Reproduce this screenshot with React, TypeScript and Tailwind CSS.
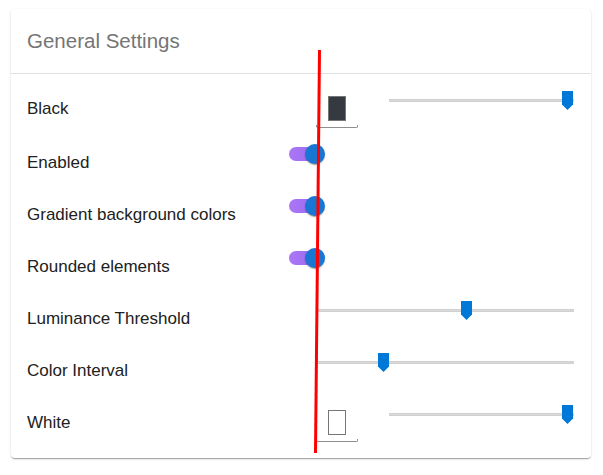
import React from "react";

const font = { fontFamily: '"Liberation Sans", Arial, sans-serif' };

function Label({ children }: { children: React.ReactNode }) {
  return (
    <div className="w-[290px] h-[52px] pt-[2px] flex items-center text-[17px] text-[#212121] shrink-0 whitespace-nowrap">
      {children}
    </div>
  );
}

function Thumb() {
  return (
    <svg width="11" height="19" viewBox="0 0 11 19" className="block">
      <path d="M0 0 H11 V13.5 L5.5 19 L0 13.5 Z" fill="#0078d7" />
    </svg>
  );
}

function Slider({ pos, className }: { pos: number; className?: string }) {
  return (
    <div className={"relative h-[36px] flex items-center " + (className ?? "")}>
      <div className="w-full h-[3px] bg-[#d9d9d9] border-y border-[#d0d0d0]" />
      <div className="absolute top-[9px]" style={{ left: pos }}>
        <Thumb />
      </div>
    </div>
  );
}

function Toggle() {
  return (
    <div className="h-[36px] flex items-center -ml-[28px]">
      <div className="relative w-[36px] h-[20px] flex items-center">
        <div className="w-[34px] h-[14px] rounded-full bg-gradient-to-r from-[#ab76f6] to-[#9a69ef]" />
        <div className="absolute left-[16px] top-0 w-[20px] h-[20px] rounded-full bg-[#1976d2] shadow-[0_2px_1px_-1px_rgba(0,0,0,0.2),0_1px_1px_0_rgba(0,0,0,0.14),0_1px_3px_0_rgba(0,0,0,0.12)]" />
      </div>
    </div>
  );
}

function ColorInput({ color }: { color: string }) {
  return (
    <div className="mt-[14px] -ml-[1px] w-[42px] flex flex-col shrink-0">
      <div
        className="ml-[12px] w-[18px] h-[25px] border border-[#767676]"
        style={{ background: color }}
      />
      <div className="mt-[4px] w-[42px] h-[3px] border-b border-x border-[#8e8e8e] rounded-b-[2px]" />
    </div>
  );
}

function ColorRow({ label, color, extra }: { label: string; color: string; extra?: string }) {
  return (
    <div className={"flex items-start " + (extra ?? "")}>
      <Label>{label}</Label>
      <div className="flex-1 flex items-start">
        <ColorInput color={color} />
        <Slider pos={173} className="ml-[31px] flex-1" />
      </div>
    </div>
  );
}

function ToggleRow({ label }: { label: string }) {
  return (
    <div className="flex items-start">
      <Label>{label}</Label>
      <div className="flex-1">
        <Toggle />
      </div>
    </div>
  );
}

function SliderRow({ label, pos }: { label: string; pos: number }) {
  return (
    <div className="flex items-start">
      <Label>{label}</Label>
      <div className="flex-1">
        <Slider pos={pos} />
      </div>
    </div>
  );
}

export default function App() {
  return (
    <div className="relative w-[603px] h-[475px] bg-white overflow-hidden" style={font}>
      <div className="ml-[11px] mt-[9px] w-[580px] bg-white rounded-[4px] shadow-[0_2px_1px_-1px_rgba(0,0,0,0.2),0_1px_1px_0_rgba(0,0,0,0.14),0_1px_3px_0_rgba(0,0,0,0.12)]">
        <div className="h-[65px] px-4 flex items-center text-[20.5px] text-[#757575] border-b border-[#e0e0e0]">
          General Settings
        </div>
        <div className="pt-2 pb-[10px] pl-4 pr-[17px]">
          <ColorRow label="Black" color="#343a40" extra="mb-[2px]" />
          <ToggleRow label="Enabled" />
          <ToggleRow label="Gradient background colors" />
          <ToggleRow label="Rounded elements" />
          <SliderRow label="Luminance Threshold" pos={144} />
          <SliderRow label="Color Interval" pos={61} />
          <ColorRow label="White" color="#ffffff" />
        </div>
      </div>
      <svg className="absolute inset-0 pointer-events-none" width="603" height="475">
        <line x1="319.5" y1="50" x2="315.5" y2="453" stroke="#ff0000" strokeWidth="3" />
      </svg>
    </div>
  );
}
